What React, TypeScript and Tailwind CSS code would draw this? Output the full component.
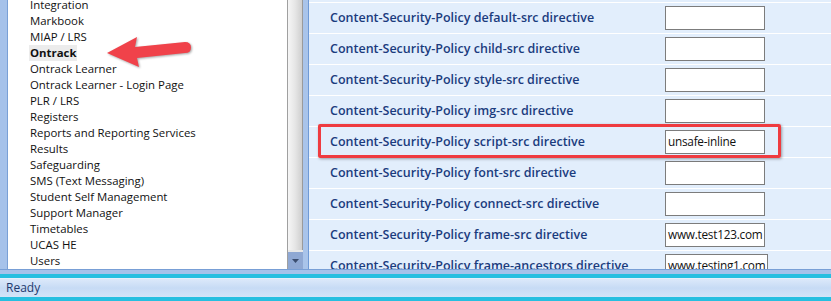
const modules = [
  "Integration",
  "Markbook",
  "MIAP / LRS",
  "Ontrack",
  "Ontrack Learner",
  "Ontrack Learner - Login Page",
  "PLR / LRS",
  "Registers",
  "Reports and Reporting Services",
  "Results",
  "Safeguarding",
  "SMS (Text Messaging)",
  "Student Self Management",
  "Support Manager",
  "Timetables",
  "UCAS HE",
  "Users",
];

const settings = [
  { label: "Content-Security-Policy default-src directive", value: "" },
  { label: "Content-Security-Policy child-src directive", value: "" },
  { label: "Content-Security-Policy style-src directive", value: "" },
  { label: "Content-Security-Policy img-src directive", value: "" },
  { label: "Content-Security-Policy script-src directive", value: "unsafe-inline" },
  { label: "Content-Security-Policy font-src directive", value: "" },
  { label: "Content-Security-Policy connect-src directive", value: "" },
  { label: "Content-Security-Policy frame-src directive", value: "www.test123.com" },
  { label: "Content-Security-Policy frame-ancestors directive", value: "www.testing1.com", wide: true },
];

const SettingRow = ({ label, value, wide }: { label: string; value: string; wide?: boolean }) => (
  <div className="flex items-center h-[31px] shrink-0 border-b border-white">
    <span className="w-[356px] pl-[21px] text-[12.5px] font-semibold text-[#1b3c7e] whitespace-nowrap overflow-hidden">
      {label}
    </span>
    <div
      className={`h-[24px] ${wide ? "w-[103px]" : "w-[100px]"} bg-white border border-[#7c7c7c] pl-[2px] text-[11.8px] tracking-[-0.25px] leading-[20px] text-[#111] whitespace-nowrap overflow-hidden`}
    >
      {value}
    </div>
  </div>
);

export default function App() {
  return (
    <div className="relative w-[831px] h-[301px] overflow-hidden bg-[#a6c2ea] font-['Open_Sans',sans-serif] flex flex-col">
      <div className="flex h-[270px] shrink-0 border-b border-[#789fd6]">
        {/* module list */}
        <div className="ml-[7px] w-[296px] flex bg-white border-l border-[#7aa0d6]">
          <div className="flex-1 flex flex-col -mt-[3px] pl-[22px] border-r border-[#a0a0a0]">
            {modules.map((m) => (
              <div key={m} className="h-[16px] shrink-0 flex items-center text-[11.4px] text-[#111] whitespace-nowrap">
                {m === "Ontrack" ? (
                  <span className="font-bold bg-[#ececec] px-[1px] -ml-[1px] leading-[16px]">{m}</span>
                ) : (
                  <span>{m}</span>
                )}
              </div>
            ))}
          </div>
          <div className="w-[15px] flex flex-col">
            <div className="flex-1 bg-gradient-to-r from-[#f6f6f6] via-[#e6e6e6] to-[#cfcfcf] border-r border-[#9a9a9a]" />
            <div className="h-[2px] bg-[#e8e8e8]" />
            <div className="h-[17px] bg-[#8fa8d3] flex items-center justify-center">
              <svg width="7" height="4" viewBox="0 0 7 4">
                <path d="M0 0h7L3.5 4z" fill="#3b4d6f" />
              </svg>
            </div>
          </div>
        </div>
        <div className="w-[5px] bg-[#a9c4ea]" />
        {/* settings grid */}
        <div className="flex-1 flex flex-col bg-[#e2eefc] border-l border-[#6f9ad6] overflow-hidden">
          <div className="h-[3px] shrink-0 border-b border-white" />
          {settings.map((s) => (
            <SettingRow key={s.label} {...s} />
          ))}
        </div>
      </div>
      <div className="h-[4px] bg-[#a6c2ea]" />
      <div className="h-[4px] bg-[#27bfe0]" />
      <div className="h-[1px] bg-[#e6f0fb]" />
      <div className="flex-1 flex items-center pl-[6px] bg-gradient-to-b from-[#dce9fa] via-[#c7dbf5] to-[#d3e4f8] text-[12px] text-[#1e3a6e]">
        Ready
      </div>
      <div className="h-[4px] bg-[#27bfe0]" />

      {/* red callout arrow */}
      <svg className="absolute left-0 top-0" width="200" height="80" viewBox="0 0 200 80" style={{ filter: "drop-shadow(1px 1px 1px rgba(0,0,0,0.35))" }}>
        <path
          d="M107 53 L137 37 L135 47 L185 42 Q191 42 191 47.5 Q191 53 185 53 L137 58 L139 67 Z"
          fill="#f0424a"
        />
      </svg>

      {/* red highlight box */}
      <div className="absolute left-[318px] top-[124px] w-[463px] h-[34px] border-[3px] border-[#ef3b40] rounded-[2px] shadow-[1px_1px_3px_rgba(0,0,0,0.35)]" />
    </div>
  );
}
